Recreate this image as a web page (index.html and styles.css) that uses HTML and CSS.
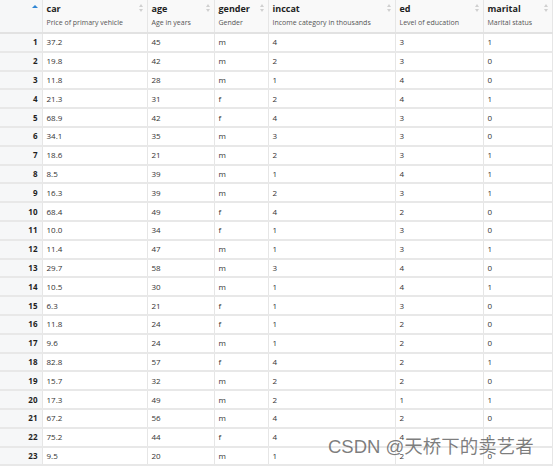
FILE: index.html
```html
<!DOCTYPE html>
<html>
<head>
<meta charset="utf-8">
<link rel="stylesheet" href="styles.css">
</head>
<body>
<div class="wrap">
<table class="grid">
<colgroup>
<col class="c-num"><col class="c-car"><col class="c-age"><col class="c-gender"><col class="c-inc"><col class="c-ed"><col class="c-mar">
</colgroup>
<thead>
<tr>
<th class="num-h"><span class="sort-up"></span></th>
<th><div class="t">car</div><div class="s">Price of primary vehicle</div><span class="sorter"></span></th>
<th><div class="t">age</div><div class="s">Age in years</div><span class="sorter"></span></th>
<th><div class="t">gender</div><div class="s">Gender</div><span class="sorter"></span></th>
<th><div class="t">inccat</div><div class="s">Income category in thousands</div><span class="sorter"></span></th>
<th><div class="t">ed</div><div class="s">Level of education</div><span class="sorter"></span></th>
<th><div class="t">marital</div><div class="s">Marital status</div><span class="sorter"></span></th>
</tr>
</thead>
<tbody>
<tr><td class="n">1</td><td>37.2</td><td>45</td><td>m</td><td>4</td><td>3</td><td>1</td></tr>
<tr><td class="n">2</td><td>19.8</td><td>42</td><td>m</td><td>2</td><td>3</td><td>0</td></tr>
<tr><td class="n">3</td><td>11.8</td><td>28</td><td>m</td><td>1</td><td>4</td><td>0</td></tr>
<tr><td class="n">4</td><td>21.3</td><td>31</td><td>f</td><td>2</td><td>4</td><td>1</td></tr>
<tr><td class="n">5</td><td>68.9</td><td>42</td><td>f</td><td>4</td><td>3</td><td>0</td></tr>
<tr><td class="n">6</td><td>34.1</td><td>35</td><td>m</td><td>3</td><td>3</td><td>0</td></tr>
<tr><td class="n">7</td><td>18.6</td><td>21</td><td>m</td><td>2</td><td>3</td><td>1</td></tr>
<tr><td class="n">8</td><td>8.5</td><td>39</td><td>m</td><td>1</td><td>4</td><td>1</td></tr>
<tr><td class="n">9</td><td>16.3</td><td>39</td><td>m</td><td>2</td><td>3</td><td>1</td></tr>
<tr><td class="n">10</td><td>68.4</td><td>49</td><td>f</td><td>4</td><td>2</td><td>0</td></tr>
<tr><td class="n">11</td><td>10.0</td><td>34</td><td>f</td><td>1</td><td>3</td><td>0</td></tr>
<tr><td class="n">12</td><td>11.4</td><td>47</td><td>m</td><td>1</td><td>3</td><td>1</td></tr>
<tr><td class="n">13</td><td>29.7</td><td>58</td><td>m</td><td>3</td><td>4</td><td>0</td></tr>
<tr><td class="n">14</td><td>10.5</td><td>30</td><td>m</td><td>1</td><td>4</td><td>1</td></tr>
<tr><td class="n">15</td><td>6.3</td><td>21</td><td>f</td><td>1</td><td>3</td><td>0</td></tr>
<tr><td class="n">16</td><td>11.8</td><td>24</td><td>f</td><td>1</td><td>2</td><td>0</td></tr>
<tr><td class="n">17</td><td>9.6</td><td>24</td><td>m</td><td>1</td><td>2</td><td>0</td></tr>
<tr><td class="n">18</td><td>82.8</td><td>57</td><td>f</td><td>4</td><td>2</td><td>1</td></tr>
<tr><td class="n">19</td><td>15.7</td><td>32</td><td>m</td><td>2</td><td>2</td><td>0</td></tr>
<tr><td class="n">20</td><td>17.3</td><td>49</td><td>m</td><td>2</td><td>1</td><td>1</td></tr>
<tr><td class="n">21</td><td>67.2</td><td>56</td><td>m</td><td>4</td><td>2</td><td>0</td></tr>
<tr><td class="n">22</td><td>75.2</td><td>44</td><td>f</td><td>4</td><td>4</td><td>1</td></tr>
<tr><td class="n">23</td><td>9.5</td><td>20</td><td>m</td><td>1</td><td>2</td><td>0</td></tr>
</tbody>
</table>
<div class="watermark">CSDN @天桥下的卖艺者</div>
</div>
</body>
</html>
```
FILE: styles.css
```css
html, body {
  margin: 0;
  padding: 0;
  background: #ffffff;
}
.wrap {
  position: relative;
  width: 554px;
  height: 466px;
  overflow: hidden;
}
.grid {
  table-layout: fixed;
  border-collapse: collapse;
  width: 552px;
  font-family: "Open Sans", "DejaVu Sans", sans-serif;
  color: #333333;
}
.c-num { width: 42px; }
.c-car { width: 105px; }
.c-age { width: 67px; }
.c-gender { width: 54px; }
.c-inc { width: 127px; }
.c-ed { width: 88px; }
.c-mar { width: 69px; }
thead tr { height: 33px; }
th {
  position: relative;
  text-align: left;
  vertical-align: top;
  padding: 3px 4px 0 4px;
  background: #f9f9f9;
  border-right: 1px solid #e6e6e6;
  border-bottom: 2px solid #e2e2e2;
  overflow: hidden;
  white-space: nowrap;
  font-weight: 400;
}
.t {
  font-size: 9px;
  font-weight: 700;
  color: #1f1f1f;
  line-height: 12px;
}
.s {
  font-size: 7px;
  font-weight: 400;
  color: #555555;
  line-height: 13px;
  margin-top: 1px;
}
.sorter {
  position: absolute;
  top: 4px;
  right: 4px;
  width: 4px;
  height: 8px;
}
.sorter::before, .sorter::after {
  content: "";
  position: absolute;
  left: 0;
  border-left: 2px solid transparent;
  border-right: 2px solid transparent;
}
.sorter::before { top: 0; border-bottom: 3px solid #d0d0d0; }
.sorter::after { bottom: 0; border-top: 3px solid #d0d0d0; }
.sort-up {
  position: absolute;
  top: 5px;
  right: 4px;
  border-left: 3px solid transparent;
  border-right: 3px solid transparent;
  border-bottom: 3px solid #2f86d4;
}
tbody tr { height: 18.8px; }
td {
  padding: 0 4px;
  font-size: 8px;
  line-height: 12px;
  border-right: 1px solid #e6e6e6;
  border-bottom: 2px solid #e8e8e8;
  white-space: nowrap;
  overflow: hidden;
  background: #ffffff;
}
td.n {
  text-align: right;
  font-weight: 700;
  color: #1f1f1f;
  background: #f6f7f8;
  padding-right: 4px;
}
.num-h { background: #f6f7f8; }
.watermark {
  position: absolute;
  left: 328px;
  top: 436px;
  font-family: "Liberation Sans", "Noto Sans CJK SC", sans-serif;
  font-size: 18.5px;
  line-height: 22px;
  color: rgba(90, 90, 90, 0.78);
  white-space: nowrap;
}
```
